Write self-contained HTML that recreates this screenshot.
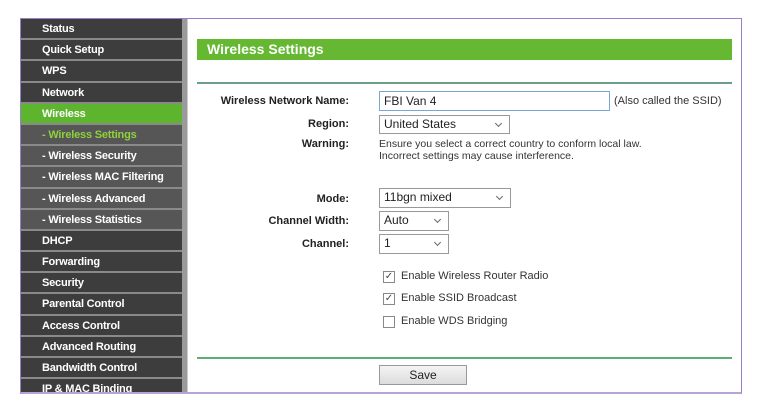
<!DOCTYPE html>
<html><head><style>
body{margin:0;width:768px;height:406px;background:#fff;font-family:"Liberation Sans",Arial,sans-serif;position:relative;overflow:hidden}
.frame{position:absolute;left:20px;top:18px;width:720px;height:373px;border:1px solid #9b7fc6;border-bottom:2px solid #b9a2d8;overflow:hidden;background:#fff}
.side{position:absolute;left:0;top:0;width:161px}
.side div{height:19.2px;line-height:20px;border-bottom:2.3px solid #8a8a8a;background:#3d3d3d;color:#fff;font-weight:bold;font-size:11px;padding-left:21px;letter-spacing:-0.2px}
.side div.act{background:#5db52e}
.side div.sub{background:#565656;padding-left:21px}
.side div.cur{color:#8fd13c}
.sep{position:absolute;left:161px;top:0;width:5px;height:380px;background:#9a9a9a;border-right:1px solid #ccc}
.abs{position:absolute}
.lbl{position:absolute;font-size:11px;font-weight:bold;color:#222;text-align:right;width:200px}
.txt{position:absolute;font-size:11px;color:#333}
.sel{position:absolute;border:1px solid #999;background:#fff;font-size:12px;color:#222;box-sizing:border-box;padding-left:4px;line-height:17px}
.sel:after{content:"";position:absolute;right:8px;top:5px;width:4px;height:4px;border-right:1px solid #666;border-bottom:1px solid #666;transform:rotate(45deg)}
.cb{position:absolute;left:383px;width:10px;height:10px;border:1px solid #888;background:#fff;font-size:10px;line-height:10px;text-align:center;color:#444}
.cbl{position:absolute;left:401px;font-size:11px;color:#333}
</style></head><body>
<div class="frame">
<div class="side">
<div>Status</div><div>Quick Setup</div><div>WPS</div><div>Network</div><div class="act">Wireless</div>
<div class="sub cur">- Wireless Settings</div><div class="sub">- Wireless Security</div><div class="sub">- Wireless MAC Filtering</div><div class="sub">- Wireless Advanced</div><div class="sub">- Wireless Statistics</div>
<div>DHCP</div><div>Forwarding</div><div>Security</div><div>Parental Control</div><div>Access Control</div><div>Advanced Routing</div><div>Bandwidth Control</div><div>IP &amp; MAC Binding</div>
</div>
<div class="sep"></div>
</div>
<div class="abs" style="left:197px;top:39px;width:535px;height:21px;background:#66b832;color:#fff;font-weight:bold;font-size:14px;line-height:21px;padding-left:10px;box-sizing:border-box">Wireless Settings</div>
<div class="abs" style="left:197px;top:82px;width:535px;height:2px;background:#6c9f8a"></div>
<div class="abs" style="left:197px;top:357px;width:535px;height:2px;background:#5fae78"></div>
<div class="lbl" style="left:149px;top:95px">Wireless Network Name:</div>
<div class="abs" style="left:379px;top:91px;width:231px;height:20px;border:1px solid #7aa7d6;box-sizing:border-box;font-size:12px;line-height:18px;padding-left:4px;color:#222">FBI Van 4</div>
<div class="txt" style="left:614px;top:95px">(Also called the SSID)</div>
<div class="lbl" style="left:149px;top:118px">Region:</div>
<div class="sel" style="left:379px;top:115px;width:131px;height:19px">United States</div>
<div class="lbl" style="left:149px;top:138px">Warning:</div>
<div class="txt" style="left:379px;top:138px;font-size:10.5px;line-height:12px">Ensure you select a correct country to conform local law.<br>Incorrect settings may cause interference.</div>
<div class="lbl" style="left:149px;top:193px">Mode:</div>
<div class="sel" style="left:379px;top:188px;width:132px;height:20px">11bgn mixed</div>
<div class="lbl" style="left:149px;top:215px">Channel Width:</div>
<div class="sel" style="left:379px;top:211px;width:70px;height:20px">Auto</div>
<div class="lbl" style="left:149px;top:238px">Channel:</div>
<div class="sel" style="left:379px;top:234px;width:70px;height:20px">1</div>
<div class="cb" style="top:271px">✓</div><div class="cbl" style="top:270px">Enable Wireless Router Radio</div>
<div class="cb" style="top:293px">✓</div><div class="cbl" style="top:292px">Enable SSID Broadcast</div>
<div class="cb" style="top:316px"></div><div class="cbl" style="top:315px">Enable WDS Bridging</div>
<div class="abs" style="left:379px;top:365px;width:88px;height:20px;border:1px solid #999;background:linear-gradient(#f4f4f4,#dcdcdc);box-sizing:border-box;text-align:center;font-size:12px;line-height:18px;color:#222">Save</div>
</body></html>
